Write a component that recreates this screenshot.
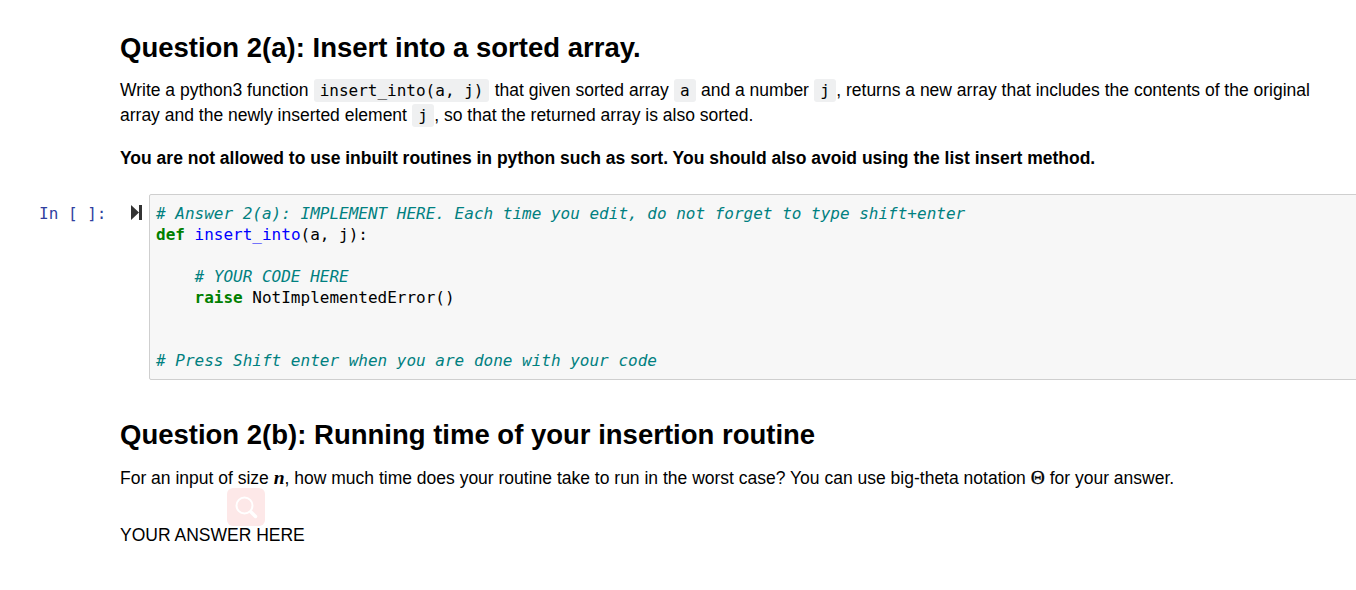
<div class="page">
	<section class="md first">
		<h2>Question 2(a): Insert into a sorted array.</h2>
		<p class="intro">Write a python3 function <code>insert_into(a, j)</code> that given sorted array <code>a</code> and a number <code>j</code>, returns a new array that includes the contents of the original array and the newly inserted element <code>j</code>, so that the returned array is also sorted.</p>
		<p class="strong"><strong>You are not allowed to use inbuilt routines in python such as sort. You should also avoid using the list insert method.</strong></p>
	</section>

	<section class="cell">
		<div class="prompt">In&nbsp;[&nbsp;]:</div>
		<div class="run">
			<svg width="11" height="15" viewBox="0 0 11 15"><path d="M0 0 L8 7.5 L0 15 Z M8 0 H11 V15 H8 Z" fill="#333"/></svg>
		</div>
		<pre class="editor"><span class="c"># Answer 2(a): IMPLEMENT HERE. Each time you edit, do not forget to type shift+enter</span>
<span class="k">def</span> <span class="f">insert_into</span>(a, j):

    <span class="c"># YOUR CODE HERE</span>
    <span class="k">raise</span> NotImplementedError()


<span class="c"># Press Shift enter when you are done with your code</span></pre>
	</section>

	<section class="md second">
		<h2>Question 2(b): Running time of your insertion routine</h2>
		<p class="q">For an input of size <i class="math">n</i>, how much time does your routine take to run in the worst case? You can use big-theta notation <span class="theta">Θ</span> for your answer.</p>
		<p class="answer">YOUR ANSWER HERE</p>
		<div class="lens">
			<svg width="26" height="26" viewBox="0 0 26 26" fill="none" stroke="#fff" stroke-width="2"><circle cx="11.5" cy="11.5" r="8"/><path d="M18 18 L22.5 22.5" stroke-width="3.5" stroke-linecap="round"/></svg>
		</div>
	</section>
</div>

<style>
	:global(body) {
		margin: 0;
		background: #fff;
		overflow: hidden;
	}
	.page {
		width: 1356px;
		height: 590px;
		overflow: hidden;
		font-family: "Liberation Sans", Arial, sans-serif;
		font-size: 17.5px;
		color: #000;
	}
	.md {
		position: relative;
		padding-left: 120px;
		padding-right: 40px;
	}
	.first {
		padding-top: 32px;
	}
	h2 {
		margin: 0;
		font-size: 27.5px;
		line-height: 32px;
		font-weight: 700;
	}
	p {
		margin: 0;
		line-height: 25px;
	}
	.intro {
		margin-top: 14px;
	}
	.strong {
		margin-top: 18px;
	}
	code {
		font-family: "DejaVu Sans Mono", monospace;
		font-size: 16px;
		background: #eff0f1;
		padding: 2px 6px;
		margin: 0 0.4px;
		border-radius: 3px;
	}
	.cell {
		display: flex;
		align-items: flex-start;
		margin-top: 23px;
	}
	.prompt {
		width: 130px;
		box-sizing: border-box;
		padding: 9px 0 0 39px;
		font-family: "DejaVu Sans Mono", monospace;
		font-size: 16px;
		line-height: 21px;
		color: #303f9f;
	}
	.run {
		width: 19px;
		padding-top: 11px;
		line-height: 0;
		margin-left: 1px;
		margin-right: -1px;
	}
	.editor {
		flex: 1;
		margin: 0 -3px 0 0;
		height: 186px;
		box-sizing: border-box;
		padding: 8px 6px;
		background: #f7f7f7;
		border: 1px solid #cfcfcf;
		border-radius: 2px;
		font-family: "DejaVu Sans Mono", monospace;
		font-size: 16px;
		line-height: 21px;
		color: #000;
	}
	.c {
		color: #008080;
		font-style: italic;
	}
	.k {
		color: #008000;
		font-weight: 700;
	}
	.f {
		color: #0000ff;
	}
	.second {
		margin-top: 39px;
	}
	.q {
		margin-top: 15px;
	}
	.math {
		font-family: "Liberation Serif", serif;
		font-size: 19.5px;
		font-weight: 700;
		line-height: 1;
	}
	.theta {
		font-family: "Liberation Serif", serif;
		font-size: 19.5px;
		line-height: 1;
		-webkit-text-stroke: 0.3px #000;
	}
	.answer {
		margin-top: 32px;
	}
	.lens {
		position: absolute;
		left: 227px;
		top: 69px;
		width: 38px;
		height: 38px;
		border-radius: 6px;
		background: #fde8e8;
		display: flex;
		align-items: center;
		justify-content: center;
	}
</style>
